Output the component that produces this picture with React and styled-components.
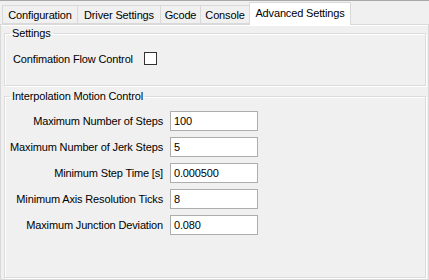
import React from "react";
import styled, { createGlobalStyle } from "styled-components";

const GlobalStyle = createGlobalStyle`
  html, body {
    margin: 0;
    padding: 0;
    background: #f0f0f0;
  }
  body {
    font-family: "Liberation Sans", Arial, sans-serif;
    font-size: 11px;
    letter-spacing: -0.15px;
    color: #000;
  }
`;

const tabs = [
  { name: "Configuration", width: 76 },
  { name: "Driver Settings", width: 84 },
  { name: "Gcode", width: 41 },
  { name: "Console", width: 50 },
  { name: "Advanced Settings", width: 102, active: true },
];

const rows = [
  { label: "Maximum Number of Steps", value: "100" },
  { label: "Maximum Number of Jerk Steps", value: "5" },
  { label: "Minimum Step Time [s]", value: "0.000500" },
  { label: "Minimum Axis Resolution Ticks", value: "8" },
  { label: "Maximum Junction Deviation", value: "0.080" },
];

function App() {
  return (
    <>
      <GlobalStyle />
      <WindowStyled>
        <TabBarStyled>
          {tabs.map((t) => (
            <TabStyled key={t.name} $active={t.active} $width={t.width}>
              {t.name}
            </TabStyled>
          ))}
        </TabBarStyled>
        <PanelStyled>
          <GroupStyled $height={57}>
            <LegendStyled>Settings</LegendStyled>
            <CheckRowStyled>
              <span>Confimation Flow Control</span>
              <CheckBoxStyled />
            </CheckRowStyled>
          </GroupStyled>
          <GroupStyled $grow>
            <LegendStyled>Interpolation Motion Control</LegendStyled>
            <FormGridStyled>
              {rows.map((r) => (
                <React.Fragment key={r.label}>
                  <LabelStyled>{r.label}</LabelStyled>
                  <InputStyled defaultValue={r.value} />
                </React.Fragment>
              ))}
            </FormGridStyled>
          </GroupStyled>
        </PanelStyled>
      </WindowStyled>
    </>
  );
}

const WindowStyled = styled.div`
  width: 429px;
  height: 280px;
  display: flex;
  flex-direction: column;
  border-top: 1px solid #a8a8a8;
  box-sizing: border-box;
  overflow: hidden;
`;

const TabBarStyled = styled.div`
  display: flex;
  align-items: flex-end;
  height: 23px;
  padding-left: 3px;
  flex-shrink: 0;
  position: relative;
  z-index: 1;
`;

const TabStyled = styled.div`
  box-sizing: border-box;
  width: ${(p) => p.$width}px;
  text-align: center;
  height: ${(p) => (p.$active ? "23px" : "19px")};
  padding-top: ${(p) => (p.$active ? "3px" : "2px")};
  margin-bottom: ${(p) => (p.$active ? "-1px" : "0")};
  background: ${(p) => (p.$active ? "#ffffff" : "#f0f0f0")};
  border: 1px solid #d9d9d9;
  border-bottom: ${(p) => (p.$active ? "none" : "1px solid #d9d9d9")};
  margin-left: -1px;
  white-space: nowrap;
  line-height: 14px;
`;

const PanelStyled = styled.div`
  flex: 1;
  display: flex;
  flex-direction: column;
  gap: 4px;
  padding: 2px 2px 1px 3px;
  border: 1px solid #d9d9d9;
  box-shadow: inset 0 1px 0 #ffffff;
  box-sizing: border-box;
`;

const GroupStyled = styled.fieldset`
  margin: 0;
  padding: 0 8px;
  border: 1px solid #dcdcdc;
  box-shadow: inset 1px 1px 0 #ffffff, 1px 1px 0 #ffffff;
  min-width: 0;
  ${(p) => (p.$grow ? "flex: 1;" : `height: ${p.$height}px; flex-shrink: 0;`)}
`;

const LegendStyled = styled.legend`
  padding: 0 2px;
  margin-left: -3px;
  line-height: 13px;
`;

const CheckRowStyled = styled.div`
  display: flex;
  align-items: center;
  gap: 11px;
  margin-top: 12px;
`;

const CheckBoxStyled = styled.div`
  width: 11px;
  height: 11px;
  border: 1px solid #333333;
  background: #ffffff;
`;

const FormGridStyled = styled.div`
  display: grid;
  grid-template-columns: 158px 88px;
  column-gap: 7px;
  row-gap: 6px;
  align-items: center;
  margin: 8px 0 0 -8px;
`;

const LabelStyled = styled.div`
  text-align: right;
  white-space: nowrap;
`;

const InputStyled = styled.input`
  box-sizing: border-box;
  height: 20px;
  width: 88px;
  border: 1px solid #adadad;
  background: #ffffff;
  padding: 0 3px;
  font-family: "Liberation Sans", Arial, sans-serif;
  font-size: 11px;
  letter-spacing: -0.15px;
  color: #000;
  outline: none;
`;

export default App;
